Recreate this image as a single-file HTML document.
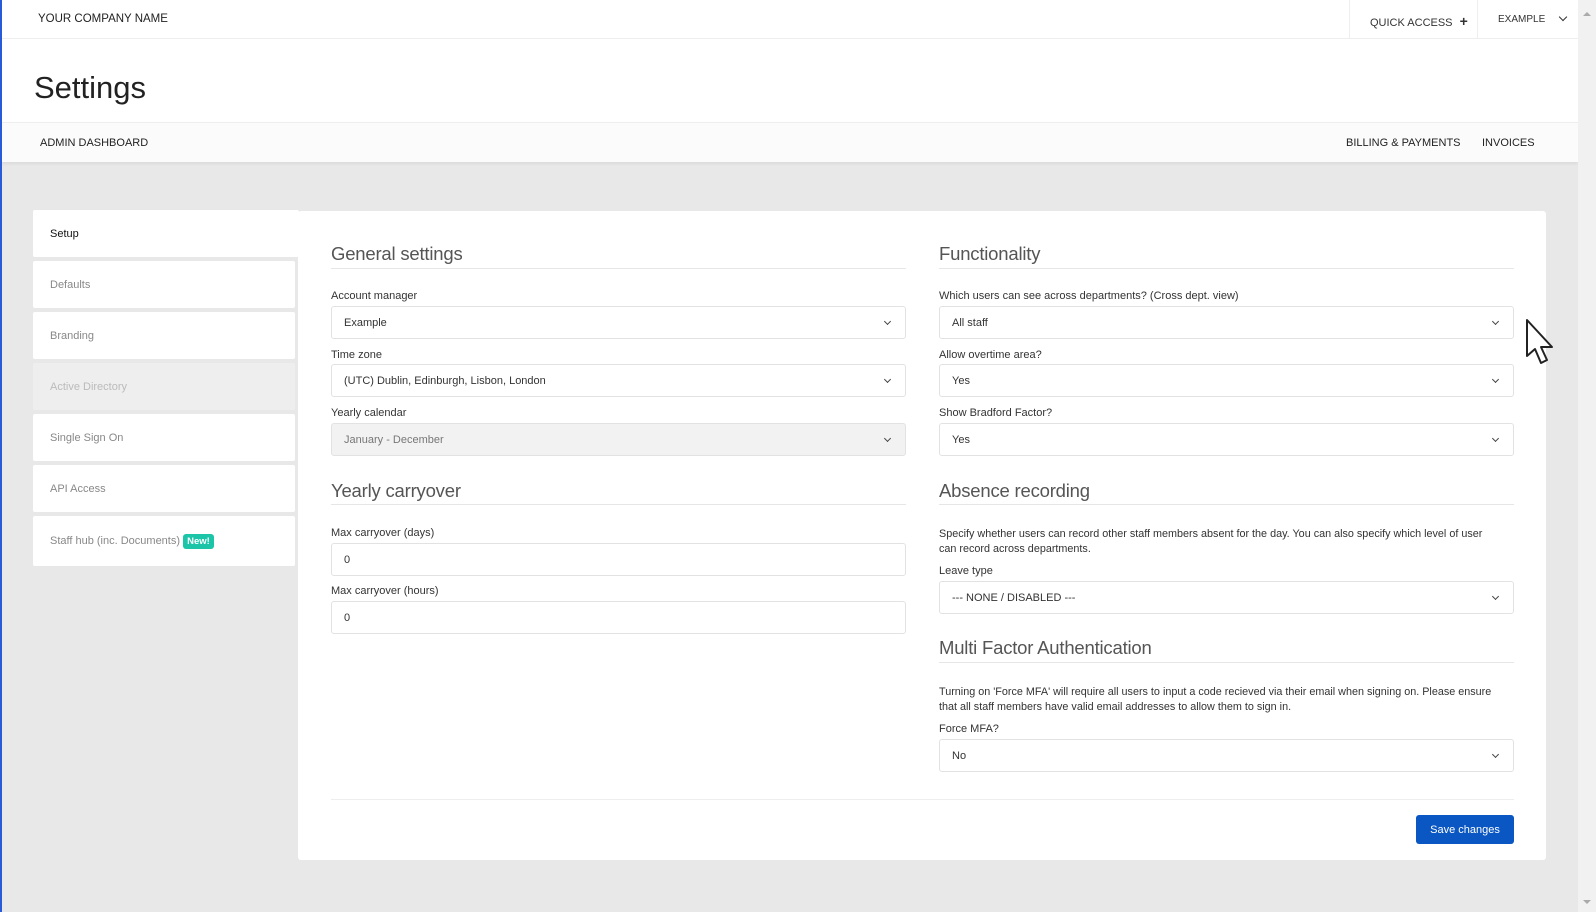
<!DOCTYPE html>
<html><head><meta charset="utf-8"><style>
*{box-sizing:border-box;margin:0;padding:0}
body{width:1596px;height:912px;overflow:hidden;background:#e8e8e8;font-family:"Liberation Sans",sans-serif;color:#333;position:relative}
.abs{position:absolute}
.top{left:0;top:0;width:1578px;height:39px;background:#fff;border-bottom:1px solid #eee}
.band{left:0;top:39px;width:1578px;height:83px;background:#fff}
.sub{left:0;top:122px;width:1578px;height:40px;background:#fbfbfb;border-top:1px solid #eee;box-shadow:0 2px 3px rgba(0,0,0,.06)}
.sb{left:1578px;top:0;width:18px;height:912px;background:#f1f1f1}
.t12{font-size:11.5px;color:#222}
.card{left:298px;top:211px;width:1248px;height:649px;background:#fff;border-radius:3px}
.tab{left:33px;width:262px;height:47px;background:#fff;font-size:11px;color:#888;padding-left:17px;line-height:49px;border-radius:2px}
h2{position:absolute;font-weight:normal;font-size:18.5px;color:#555;letter-spacing:-.2px}
.hl{position:absolute;height:1px;background:#e6e6e6}
.lb{position:absolute;font-size:11px;color:#333}
.sel{position:absolute;height:33px;border:1px solid #e2e2e2;border-radius:3px;background:#fff;font-size:11px;color:#333;padding-left:12px;line-height:33px}
.sel.ch::after{content:"";position:absolute;right:15px;top:12px;width:4px;height:4px;border-right:1.3px solid #444;border-bottom:1.3px solid #444;transform:rotate(45deg)}
.dis{background:#f2f2f2;color:#777}
.p{position:absolute;font-size:10.8px;color:#333;line-height:15px}
</style></head><body>
<div class="abs" style="left:0;top:0;width:2px;height:912px;background:#2a5bd7;z-index:5"></div>
<div class="abs top"></div>
<div class="abs t12" style="left:38px;top:13px">YOUR COMPANY NAME</div>
<div class="abs" style="left:1349px;top:0;width:1px;height:38px;background:#eee"></div>
<div class="abs" style="left:1477px;top:0;width:1px;height:38px;background:#eee"></div>
<div class="abs" style="left:1370px;top:13px;font-size:11px;color:#333">QUICK ACCESS <b style="margin-left:4px;font-size:14px">+</b></div>
<div class="abs" style="left:1498px;top:14px;font-size:10px;color:#333">EXAMPLE</div>
<div class="abs" style="left:1560px;top:14px;width:6px;height:6px;border-right:1.5px solid #333;border-bottom:1.5px solid #333;transform:rotate(45deg)"></div>
<div class="abs band"></div>
<div class="abs" style="left:34px;top:70px;font-size:31px;color:#222">Settings</div>
<div class="abs sub"></div>
<div class="abs" style="left:40px;top:137px;font-size:11px;color:#222">ADMIN DASHBOARD</div>
<div class="abs" style="left:1346px;top:137px;font-size:11px;color:#222">BILLING &amp; PAYMENTS</div>
<div class="abs" style="left:1482px;top:137px;font-size:11px;color:#222">INVOICES</div>
<div class="abs sb"><div style="position:absolute;left:5px;top:8px;border:4px solid transparent;border-bottom-color:#aaa"></div><div style="position:absolute;left:5px;bottom:4px;border:4px solid transparent;border-top-color:#aaa"></div></div>

<div class="abs card"></div>
<div class="abs tab" style="top:210px;width:266px;color:#111">Setup</div>
<div class="abs tab" style="top:261px">Defaults</div>
<div class="abs tab" style="top:312px">Branding</div>
<div class="abs tab" style="top:363px;background:#eee;color:#bbb">Active Directory</div>
<div class="abs tab" style="top:414px">Single Sign On</div>
<div class="abs tab" style="top:465px">API Access</div>
<div class="abs tab" style="top:516px;height:50px;line-height:50px">Staff hub (inc. Documents) <span style="background:#1cc4a8;color:#fff;font-size:9.5px;font-weight:bold;padding:2px 4px;border-radius:3px">New!</span></div>

<h2 style="left:331px;top:243px">General settings</h2><div class="hl" style="left:331px;top:268px;width:575px"></div>
<div class="lb" style="left:331px;top:290px">Account manager</div>
<div class="sel ch" style="left:331px;top:306px;width:575px">Example</div>
<div class="lb" style="left:331px;top:349px">Time zone</div>
<div class="sel ch" style="left:331px;top:364px;width:575px">(UTC) Dublin, Edinburgh, Lisbon, London</div>
<div class="lb" style="left:331px;top:407px">Yearly calendar</div>
<div class="sel ch dis" style="left:331px;top:423px;width:575px">January - December</div>
<h2 style="left:331px;top:480px">Yearly carryover</h2><div class="hl" style="left:331px;top:504px;width:575px"></div>
<div class="lb" style="left:331px;top:527px">Max carryover (days)</div>
<div class="sel" style="left:331px;top:543px;width:575px">0</div>
<div class="lb" style="left:331px;top:585px">Max carryover (hours)</div>
<div class="sel" style="left:331px;top:601px;width:575px">0</div>

<h2 style="left:939px;top:243px">Functionality</h2><div class="hl" style="left:939px;top:268px;width:575px"></div>
<div class="lb" style="left:939px;top:290px">Which users can see across departments? (Cross dept. view)</div>
<div class="sel ch" style="left:939px;top:306px;width:575px">All staff</div>
<div class="lb" style="left:939px;top:349px">Allow overtime area?</div>
<div class="sel ch" style="left:939px;top:364px;width:575px">Yes</div>
<div class="lb" style="left:939px;top:407px">Show Bradford Factor?</div>
<div class="sel ch" style="left:939px;top:423px;width:575px">Yes</div>
<h2 style="left:939px;top:480px">Absence recording</h2><div class="hl" style="left:939px;top:504px;width:575px"></div>
<div class="p" style="left:939px;top:527px;width:560px">Specify whether users can record other staff members absent for the day. You can also specify which level of user can record across departments.</div>
<div class="lb" style="left:939px;top:565px">Leave type</div>
<div class="sel ch" style="left:939px;top:581px;width:575px">--- NONE / DISABLED ---</div>
<h2 style="left:939px;top:637px">Multi Factor Authentication</h2><div class="hl" style="left:939px;top:662px;width:575px"></div>
<div class="p" style="left:939px;top:685px;width:560px">Turning on 'Force MFA' will require all users to input a code recieved via their email when signing on. Please ensure that all staff members have valid email addresses to allow them to sign in.</div>
<div class="lb" style="left:939px;top:723px">Force MFA?</div>
<div class="sel ch" style="left:939px;top:739px;width:575px">No</div>
<div class="hl" style="left:331px;top:799px;width:1183px;background:#eee"></div>
<div class="abs" style="left:1416px;top:815px;width:98px;height:29px;background:#0a56c2;border-radius:3px;color:#fff;font-size:11px;text-align:center;line-height:31px">Save changes</div>

<svg class="abs" style="left:1525px;top:318px" width="32" height="48" viewBox="0 0 32 48"><path d="M2 2 L2 38 L10 31 L16 45 L22 42 L16 29 L27 29 Z" fill="#fff" stroke="#222" stroke-width="2" stroke-linejoin="round"/></svg>
</body></html>
